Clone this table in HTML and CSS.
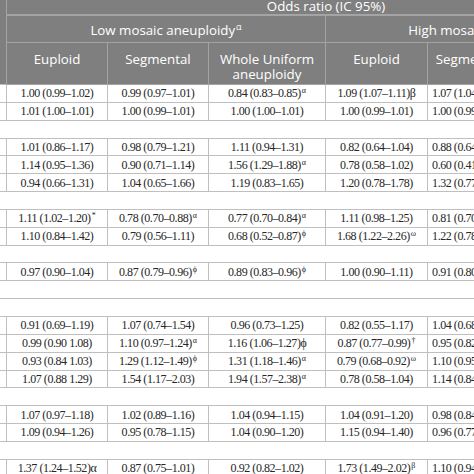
FILE: index.html
```html
<!DOCTYPE html>
<html>
<head>
<meta charset="utf-8">
<link rel="stylesheet" href="styles.css">
</head>
<body>
<table class="tbl">
  <colgroup>
    <col class="c-label">
    <col class="c-eu">
    <col class="c-seg">
    <col class="c-whole">
    <col class="c-eu2">
    <col class="c-seg2">
    <col class="c-whole2">
  </colgroup>
  <thead>
    <tr class="h1">
      <th class="corner" rowspan="3"></th>
      <th colspan="6">Odds ratio (IC 95%)</th>
    </tr>
    <tr class="h2">
      <th colspan="3">Low mosaic aneuploidy<sup>α</sup></th>
      <th colspan="3">High mosaic aneuploidy<sup>α</sup></th>
    </tr>
    <tr class="h3">
      <th>Euploid</th>
      <th>Segmental</th>
      <th>Whole Uniform aneuploidy</th>
      <th>Euploid</th>
      <th>Segmental</th>
      <th>Whole Uniform aneuploidy</th>
    </tr>
  </thead>
  <tbody>
    <tr class="d"><td></td><td>1.00 (0.99–1.02)</td><td>0.99 (0.97–1.01)</td><td>0.84 (0.83–0.85)<sup>α</sup></td><td>1.09 (1.07–1.11)β</td><td>1.07 (1.04–1.10)</td><td></td></tr>
    <tr class="d"><td></td><td>1.01 (1.00–1.01)</td><td>1.00 (0.99–1.01)</td><td>1.00 (1.00–1.01)</td><td>1.00 (0.99–1.01)</td><td>1.00 (0.99–1.01)</td><td></td></tr>
    <tr class="g"><td colspan="7"></td></tr>
    <tr class="d"><td></td><td>1.01 (0.86–1.17)</td><td>0.98 (0.79–1.21)</td><td>1.11 (0.94–1.31)</td><td>0.82 (0.64–1.04)</td><td>0.88 (0.64–1.21)</td><td></td></tr>
    <tr class="d"><td></td><td>1.14 (0.95–1.36)</td><td>0.90 (0.71–1.14)</td><td>1.56 (1.29–1.88)<sup>α</sup></td><td>0.78 (0.58–1.02)</td><td>0.60 (0.41–0.88)</td><td></td></tr>
    <tr class="d"><td></td><td>0.94 (0.66–1.31)</td><td>1.04 (0.65–1.66)</td><td>1.19 (0.83–1.65)</td><td>1.20 (0.78–1.78)</td><td>1.32 (0.77–2.26)</td><td></td></tr>
    <tr class="g"><td colspan="7"></td></tr>
    <tr class="d"><td></td><td>1.11 (1.02–1.20)<sup>*</sup></td><td>0.78 (0.70–0.88)<sup>α</sup></td><td>0.77 (0.70–0.84)<sup>α</sup></td><td>1.11 (0.98–1.25)</td><td>0.81 (0.70–0.94)</td><td></td></tr>
    <tr class="d"><td></td><td>1.10 (0.84–1.42)</td><td>0.79 (0.56–1.11)</td><td>0.68 (0.52–0.87)<sup>ϕ</sup></td><td>1.68 (1.22–2.26)<sup>ω</sup></td><td>1.22 (0.78–1.90)</td><td></td></tr>
    <tr class="g"><td colspan="7"></td></tr>
    <tr class="d"><td></td><td>0.97 (0.90–1.04)</td><td>0.87 (0.79–0.96)<sup>ϕ</sup></td><td>0.89 (0.83–0.96)<sup>ϕ</sup></td><td>1.00 (0.90–1.11)</td><td>0.91 (0.80–1.03)</td><td></td></tr>
    <tr class="g"><td colspan="7"></td></tr>
    <tr class="g"><td colspan="7"></td></tr>
    <tr class="d"><td></td><td>0.91 (0.69–1.19)</td><td>1.07 (0.74–1.54)</td><td>0.96 (0.73–1.25)</td><td>0.82 (0.55–1.17)</td><td>1.04 (0.68–1.58)</td><td></td></tr>
    <tr class="d"><td></td><td>0.99 (0.90 1.08)</td><td>1.10 (0.97–1.24)<sup>α</sup></td><td>1.16 (1.06–1.27)ϕ</td><td>0.87 (0.77–0.99)<sup>†</sup></td><td>0.95 (0.82–1.10)</td><td></td></tr>
    <tr class="d"><td></td><td>0.93 (0.84 1.03)</td><td>1.29 (1.12–1.49)<sup>ϕ</sup></td><td>1.31 (1.18–1.46)<sup>α</sup></td><td>0.79 (0.68–0.92)<sup>ω</sup></td><td>1.10 (0.95–1.28)</td><td></td></tr>
    <tr class="d"><td></td><td>1.07 (0.88 1.29)</td><td>1.54 (1.17–2.03)</td><td>1.94 (1.57–2.38)<sup>α</sup></td><td>0.78 (0.58–1.04)</td><td>1.14 (0.84–1.55)</td><td></td></tr>
    <tr class="g"><td colspan="7"></td></tr>
    <tr class="d"><td></td><td>1.07 (0.97–1.18)</td><td>1.02 (0.89–1.16)</td><td>1.04 (0.94–1.15)</td><td>1.04 (0.91–1.20)</td><td>0.98 (0.84–1.14)</td><td></td></tr>
    <tr class="d"><td></td><td>1.09 (0.94–1.26)</td><td>0.95 (0.78–1.15)</td><td>1.04 (0.90–1.20)</td><td>1.15 (0.94–1.40)</td><td>0.96 (0.77–1.20)</td><td></td></tr>
    <tr class="g"><td colspan="7"></td></tr>
    <tr class="d"><td></td><td>1.37 (1.24–1.52)α</td><td>0.87 (0.75–1.01)</td><td>0.92 (0.82–1.02)</td><td>1.73 (1.49–2.02)<sup>β</sup></td><td>1.10 (0.94–1.29)</td><td></td></tr>
  </tbody>
</table>
</body>
</html>
```

FILE: styles.css
```css
html, body {
  margin: 0;
  padding: 0;
  background: #ffffff;
}
body {
  width: 474px;
  height: 474px;
  overflow: hidden;
}
.tbl {
  border-collapse: collapse;
  table-layout: fixed;
  width: 699px;
  margin-left: -54px;
}
.c-label { width: 60px; }
.c-eu { width: 101px; }
.c-seg { width: 101px; }
.c-whole { width: 117px; }
.c-eu2 { width: 102px; }
.c-seg2 { width: 82px; }
.c-whole2 { width: 136px; }

.tbl th {
  background: #7f7f7f;
  color: #ffffff;
  font-family: "Open Sans", "Noto Sans", sans-serif;
  font-weight: 400;
  font-size: 13.3px;
  line-height: 15px;
  text-align: center;
  border: 1px solid #a4a4a4;
  padding: 0 4px;
}
.tbl th.corner {
  border-top: none;
  border-left: none;
  border-bottom: none;
}
.tbl th sup {
  font-size: 9px;
  line-height: 0;
  vertical-align: 5px;
  margin-left: 1px;
}
.h1 th {
  height: 14px;
  border-top: none;
  border-bottom: 2px solid #a4a4a4;
  vertical-align: top;
  line-height: 13px;
}
.h2 th {
  height: 23px;
  padding-top: 3px;
  vertical-align: middle;
}
.h3 th {
  height: 42px;
  vertical-align: top;
  padding-top: 9px;
  box-sizing: border-box;
}

.tbl td {
  font-family: "Liberation Serif", "Times New Roman", serif;
  font-size: 12px;
  letter-spacing: -0.45px;
  line-height: 12px;
  color: #262626;
  text-align: center;
  white-space: nowrap;
  overflow: hidden;
  border: 1px solid #bfbfbf;
  padding: 0;
}
.d td { height: 16.85px; }
.g td {
  height: 16.85px;
  border-left: none;
  border-right: none;
}
.tbl td sup {
  font-size: 8px;
  letter-spacing: 0;
  line-height: 0;
  vertical-align: 4px;
  margin-left: 1px;
}
```
